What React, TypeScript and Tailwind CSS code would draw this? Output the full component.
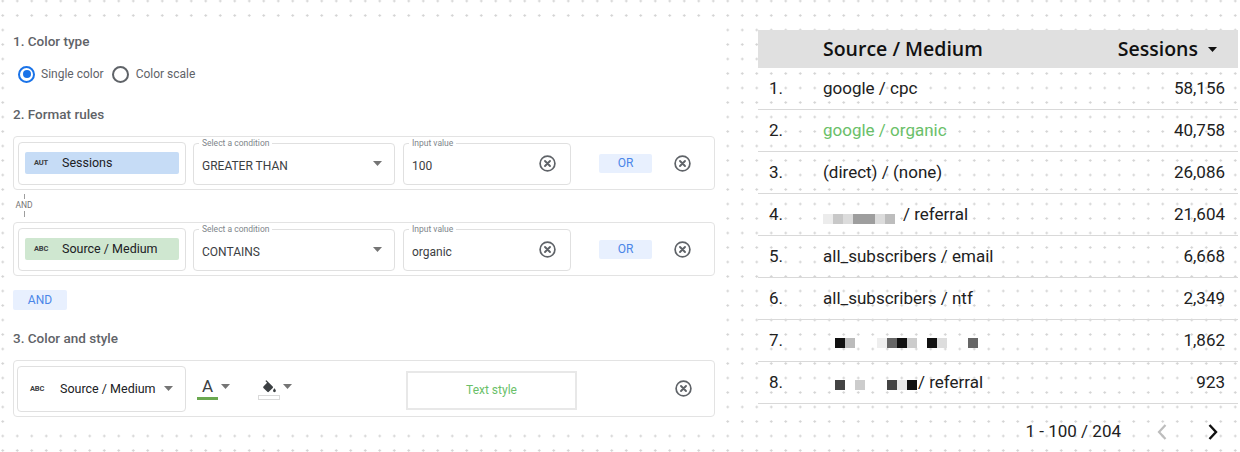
import React from "react";

const CloseCircle = () => (
  <svg width="17" height="17" viewBox="0 0 17 17" className="shrink-0">
    <circle cx="8.5" cy="8.5" r="7.4" fill="none" stroke="#5f6368" strokeWidth="1.7" />
    <path d="M6 6l5 5M11 6l-5 5" stroke="#5f6368" strokeWidth="1.9" strokeLinecap="round" />
  </svg>
);

const Caret = ({ color = "#757575" }: { color?: string }) => (
  <svg width="9" height="5" viewBox="0 0 9 5" className="shrink-0 block">
    <path d="M0 0h9L4.5 5z" fill={color} />
  </svg>
);

const Radio = ({ checked }: { checked?: boolean }) =>
  checked ? (
    <span className="w-[17px] h-[17px] rounded-full border-2 border-[#1a73e8] flex items-center justify-center shrink-0">
      <span className="w-[8px] h-[8px] rounded-full bg-[#1a73e8]" />
    </span>
  ) : (
    <span className="block w-[17px] h-[17px] rounded-full border-2 border-[#5f6368] shrink-0" />
  );

function RuleRow({
  type,
  field,
  chip,
  condition,
  value,
}: {
  type: string;
  field: string;
  chip: string;
  condition: string;
  value: string;
}) {
  return (
    <div className="w-[702px] h-[54px] border border-[#e3e3e3] rounded-[4px] flex items-center pl-[4px]">
      <div className="w-[168px] h-[43px] border border-[#e0e0e0] rounded-[4px] flex items-center pl-[6px]">
        <div className={`w-[154px] h-[22px] rounded-[2px] flex items-center ${chip}`}>
          <span className="w-[37px] pl-[9px] text-[7.5px] font-bold text-[#3c4043] tracking-tight">{type}</span>
          <span className="text-[12.5px] text-[#202124]">{field}</span>
        </div>
      </div>
      <div className="relative ml-[7px] w-[202px] h-[42px] border border-[#e0e0e0] rounded-[4px] flex items-center pl-[8px] pr-[12px] mt-[1px]">
        <span className="absolute left-[5px] top-[-6px] bg-white px-[3px] text-[8.5px] leading-[10px] text-[#80868b]">
          Select a condition
        </span>
        <span className="flex-1 text-[12px] text-[#3c4043] mt-[5px]">{condition}</span>
        <Caret />
      </div>
      <div className="relative ml-[8px] w-[168px] h-[42px] border border-[#e0e0e0] rounded-[4px] flex items-center pl-[8px] pr-[14px] mt-[1px]">
        <span className="absolute left-[5px] top-[-6px] bg-white px-[3px] text-[8.5px] leading-[10px] text-[#80868b]">
          Input value
        </span>
        <span className="flex-1 text-[12px] text-[#3c4043] mt-[5px]">{value}</span>
        <CloseCircle />
      </div>
      <div className="ml-[28px] w-[53px] h-[19px] rounded-[2px] bg-[#e8f0fe] flex items-center justify-center text-[12px] text-[#4a86e8]">
        OR
      </div>
      <div className="ml-[22px]">
        <CloseCircle />
      </div>
    </div>
  );
}

const rows: { n: string; label: React.ReactNode; value: string; green?: boolean }[] = [
  { n: "1.", label: "google / cpc", value: "58,156" },
  { n: "2.", label: "google / organic", value: "40,758", green: true },
  { n: "3.", label: "(direct) / (none)", value: "26,086" },
  {
    n: "4.",
    label: (
      <span className="flex items-center">
        <span className="flex mt-[8px]">
          <span className="w-[10px] h-[10px] bg-[#ececec]" />
          <span className="w-[10px] h-[10px] bg-[#c8c8c8]" />
          <span className="w-[10px] h-[10px] bg-[#dcdcdc]" />
          <span className="w-[22px] h-[10px] bg-[#9e9e9e]" />
          <span className="w-[10px] h-[10px] bg-[#dcdcdc]" />
          <span className="w-[10px] h-[10px] bg-[#bdbdbd]" />
        </span>
        <span className="ml-[8px]">/ referral</span>
      </span>
    ),
    value: "21,604",
  },
  { n: "5.", label: "all_subscribers / email", value: "6,668" },
  { n: "6.", label: "all_subscribers / ntf", value: "2,349" },
  {
    n: "7.",
    label: (
      <span className="flex h-[10px] mt-[4px]">
        <span className="w-[12px]" />
        <span className="w-[10px] bg-[#111]" />
        <span className="w-[10px] bg-[#bbb]" />
        <span className="w-[22px]" />
        <span className="w-[10px] bg-[#eee]" />
        <span className="w-[10px] bg-[#666]" />
        <span className="w-[10px] bg-[#111]" />
        <span className="w-[10px] bg-[#ccc]" />
        <span className="w-[10px]" />
        <span className="w-[10px] bg-[#111]" />
        <span className="w-[10px] bg-[#ddd]" />
        <span className="w-[21px]" />
        <span className="w-[10px] bg-[#666]" />
      </span>
    ),
    value: "1,862",
  },
  {
    n: "8.",
    label: (
      <span className="flex items-center">
        <span className="flex h-[10px] mt-[4px]">
          <span className="w-[12px]" />
          <span className="w-[10px] bg-[#444]" />
          <span className="w-[10px]" />
          <span className="w-[10px] bg-[#ccc]" />
          <span className="w-[22px]" />
          <span className="w-[10px] bg-[#444]" />
          <span className="w-[10px] bg-[#e8e8e8]" />
          <span className="w-[10px] bg-[#111]" />
        </span>
        <span className="ml-[1px]">/ referral</span>
      </span>
    ),
    value: "923",
  },
];

export default function App() {
  return (
    <div
      className="w-[1240px] h-[452px] flex items-start overflow-hidden bg-white bg-[radial-gradient(circle,#d2d2d2_0.9px,transparent_1.4px)] bg-[size:14.5px_14.5px] bg-[position:-4.5px_-6.25px]"
      style={{ fontFamily: "Roboto, 'Liberation Sans', sans-serif" }}
    >
      {/* left: conditional formatting panel */}
      <div className="ml-[8px] mt-[20px] w-[718px] h-[408px] bg-white pt-[11px] pl-[5px] flex flex-col">
        <div className="h-[20px] leading-[20px] text-[13.5px] font-medium text-[#5f6368]">1. Color type</div>
        <div className="mt-[13px] h-[20px] flex items-center text-[12px] text-[#5f6368]">
          <span className="ml-[5px]">
            <Radio checked />
          </span>
          <span className="ml-[6px]">Single color</span>
          <span className="ml-[8px]">
            <Radio />
          </span>
          <span className="ml-[7px]">Color scale</span>
        </div>
        <div className="mt-[20px] h-[20px] leading-[20px] text-[13.5px] font-medium text-[#5f6368]">2. Format rules</div>
        <div className="mt-[12px]">
          <RuleRow type="AUT" field="Sessions" chip="bg-[#c6dcf6]" condition="GREATER THAN" value="100" />
        </div>
        <div className="h-[32px] w-[20px] ml-[1px] flex flex-col items-center">
          <span className="mt-[4px] h-[5px] w-px bg-[#9e9e9e]" />
          <span className="h-[12px] leading-[12px] text-[8.5px] text-[#757575]">AND</span>
          <span className="h-[6px] w-px bg-[#9e9e9e]" />
        </div>
        <RuleRow type="ABC" field="Source / Medium" chip="bg-[#cfe7d0]" condition="CONTAINS" value="organic" />
        <div className="mt-[14px] w-[54px] h-[20px] rounded-[2px] bg-[#e8f0fe] flex items-center justify-center text-[12px] text-[#4a86e8]">
          AND
        </div>
        <div className="mt-[18px] h-[20px] leading-[20px] text-[13.5px] font-medium text-[#5f6368]">3. Color and style</div>
        <div className="mt-[12px] w-[702px] h-[57px] border border-[#e3e3e3] rounded-[4px] flex items-center pl-[3px]">
          <div className="w-[169px] h-[46px] border border-[#e0e0e0] rounded-[4px] flex items-center pl-[12px] pr-[12px]">
            <span className="w-[30px] text-[7.5px] font-bold text-[#3c4043] tracking-tight">ABC</span>
            <span className="flex-1 text-[12.5px] text-[#202124] mt-[2px]">Source / Medium</span>
            <Caret />
          </div>
          <div className="ml-[11px] w-[21px] flex flex-col items-center">
            <span className="text-[17px] leading-[17px] text-[#3c4043]">A</span>
            <span className="mt-[2px] h-[3px] w-[21px] bg-[#6aa84f]" />
          </div>
          <span className="ml-[3px] mb-[4px]">
            <Caret />
          </span>
          <div className="ml-[28px] w-[22px] flex flex-col items-center">
            <svg width="17" height="17" viewBox="0 0 24 24">
              <path
                d="M16.56 8.94L7.62 0 6.21 1.41l2.38 2.38-5.15 5.15c-.59.59-.59 1.54 0 2.12l5.5 5.5c.29.29.68.44 1.06.44s.77-.15 1.06-.44l5.5-5.5c.59-.58.59-1.53 0-2.12zM19 11.5s-2 2.17-2 3.5c0 1.1.9 2 2 2s2-.9 2-2c0-1.33-2-3.5-2-3.5z"
                fill="#3c4043"
                transform="translate(0 3)"
              />
            </svg>
            <span className="h-[5px] w-[22px] bg-white border border-[#dadada]" />
          </div>
          <span className="ml-[3px] mb-[4px]">
            <Caret />
          </span>
          <div className="ml-[114px] mt-[3px] w-[171px] h-[39px] border-2 border-[#e8e8e8] flex items-center justify-center text-[12px] text-[#6abf69]">
            Text style
          </div>
          <div className="ml-[98px]">
            <CloseCircle />
          </div>
        </div>
      </div>

      {/* right: table */}
      <div className="ml-[32px] mt-[30px] w-[480px] flex flex-col">
        <div
          className="h-[38px] bg-[#e0e0e0] flex items-center pl-[65px] pr-[21px] text-[19.5px] font-semibold text-[#111]"
          style={{ fontFamily: "'Open Sans', Roboto, sans-serif" }}
        >
          <span className="flex-1">Source / Medium</span>
          <span>Sessions</span>
          <span className="ml-[10px] mt-[1px]">
            <Caret color="#111" />
          </span>
        </div>
        {rows.map((r) => (
          <div
            key={r.n}
            className="h-[42px] border-b border-[#d9d9d9] flex items-center pl-[11px] pr-[13px] text-[17px] text-[#212121]"
          >
            <span className="w-[54px]">{r.n}</span>
            <span className={`flex-1 ${r.green ? "text-[#6abf69]" : ""}`}>{r.label}</span>
            <span>{r.value}</span>
          </div>
        ))}
        <div className="h-[56px] flex items-center justify-end pr-[19px] text-[17px] text-[#212121]">
          <span>1 - 100 / 204</span>
          <svg width="12" height="18" viewBox="0 0 12 18" className="ml-[35px]">
            <path d="M9.5 2L3 9l6.5 7" fill="none" stroke="#bdbdbd" strokeWidth="2.2" />
          </svg>
          <svg width="12" height="18" viewBox="0 0 12 18" className="ml-[39px]">
            <path d="M2.5 2L9 9l-6.5 7" fill="none" stroke="#111" strokeWidth="2.4" />
          </svg>
        </div>
      </div>
    </div>
  );
}
